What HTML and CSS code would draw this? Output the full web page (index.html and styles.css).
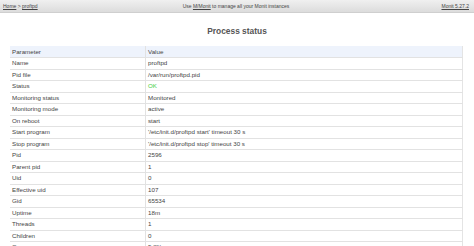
FILE: index.html
```html
<!DOCTYPE html>
<html>
<head>
<meta charset="utf-8">
<link rel="stylesheet" href="styles.css">
</head>
<body>
<div class="nav">
  <div class="nav-left"><a href="#">Home</a> &gt; <a href="#">proftpd</a></div>
  <div class="nav-center">Use <a href="#">M/Monit</a> to manage all your Monit instances</div>
  <div class="nav-right"><a href="#">Monit 5.27.2</a></div>
</div>
<h1 class="title">Process status</h1>
<table class="status">
  <tr class="head"><td class="k">Parameter</td><td>Value</td></tr>
  <tr><td class="k">Name</td><td>proftpd</td></tr>
  <tr><td class="k">Pid file</td><td>/var/run/proftpd.pid</td></tr>
  <tr><td class="k">Status</td><td class="ok">OK</td></tr>
  <tr><td class="k">Monitoring status</td><td>Monitored</td></tr>
  <tr><td class="k">Monitoring mode</td><td>active</td></tr>
  <tr><td class="k">On reboot</td><td>start</td></tr>
  <tr><td class="k">Start program</td><td>'/etc/init.d/proftpd start' timeout 30 s</td></tr>
  <tr><td class="k">Stop program</td><td>'/etc/init.d/proftpd stop' timeout 30 s</td></tr>
  <tr><td class="k">Pid</td><td>2596</td></tr>
  <tr><td class="k">Parent pid</td><td>1</td></tr>
  <tr><td class="k">Uid</td><td>0</td></tr>
  <tr><td class="k">Effective uid</td><td>107</td></tr>
  <tr><td class="k">Gid</td><td>65534</td></tr>
  <tr><td class="k">Uptime</td><td>18m</td></tr>
  <tr><td class="k">Threads</td><td>1</td></tr>
  <tr><td class="k">Children</td><td>0</td></tr>
  <tr><td class="k">Cpu</td><td>5.8%</td></tr>
</table>
</body>
</html>
```
FILE: styles.css
```css
html, body {
  margin: 0;
  padding: 0;
  background: #fff;
  font-family: "Liberation Sans", Arial, sans-serif;
  color: #444;
}
.nav {
  height: 12px;
  display: flex;
  align-items: center;
  justify-content: space-between;
  padding: 0 5px 0 3px;
  background: linear-gradient(#f0f0f0, #dcdcdc);
  border-bottom: 1px solid #cfcfcf;
  font-size: 5px;
  color: #444;
  white-space: nowrap;
}
.nav a {
  color: #444;
  text-decoration: underline;
}
.nav-left, .nav-right {
  flex: 1 1 0;
}
.nav-right {
  text-align: right;
}
.title {
  margin: 0;
  padding: 13px 0 0;
  height: 20px;
  text-align: center;
  font-size: 8.4px;
  font-weight: bold;
  color: #555;
}
.status {
  margin: 0 10px;
  width: 453px;
  border-collapse: collapse;
  font-size: 6.2px;
  color: #444;
  border-right: 1px solid #e4e4e4;
}
.status td {
  padding: 0 2px;
  line-height: 10.5px;
  border-bottom: 1px solid #e2e2e2;
  vertical-align: middle;
  white-space: nowrap;
}
.status td.k {
  width: 131px;
  border-right: 1px solid #e2e2e2;
}
.status tr.head td {
  background: #eef3fc;
  line-height: 11px;
}
.status .ok {
  color: #3fcf3f;
}
```
